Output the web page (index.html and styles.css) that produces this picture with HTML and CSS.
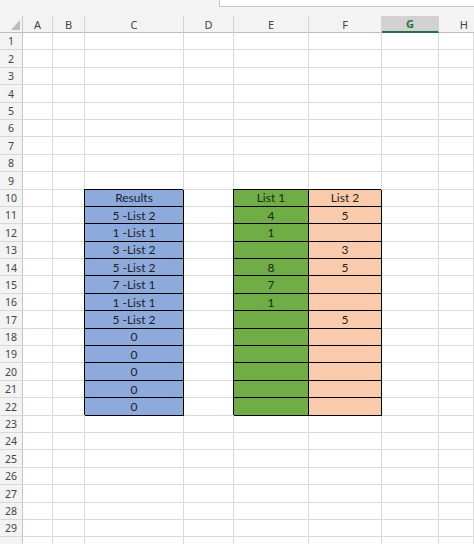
FILE: index.html
```html
<!DOCTYPE html>
<html>
<head>
<meta charset="utf-8">
<link rel="stylesheet" href="styles.css">
</head>
<body>
<div class="topband"><div class="fbox"></div></div>
<div class="sheet">
  <div class="corner"><svg width="23" height="17" viewBox="0 0 23 17"><polygon points="20,4 20,14 11,14" fill="#bdbdbd"/></svg></div>
  <div class="ch">A</div><div class="ch">B</div><div class="ch">C</div><div class="ch">D</div><div class="ch">E</div><div class="ch">F</div><div class="ch sel">G</div><div class="ch last">H</div>

  <div class="rh">1</div><div class="c"></div><div class="c"></div><div class="c"></div><div class="c"></div><div class="c"></div><div class="c"></div><div class="c"></div><div class="c"></div>
  <div class="rh">2</div><div class="c"></div><div class="c"></div><div class="c"></div><div class="c"></div><div class="c"></div><div class="c"></div><div class="c"></div><div class="c"></div>
  <div class="rh">3</div><div class="c"></div><div class="c"></div><div class="c"></div><div class="c"></div><div class="c"></div><div class="c"></div><div class="c"></div><div class="c"></div>
  <div class="rh">4</div><div class="c"></div><div class="c"></div><div class="c"></div><div class="c"></div><div class="c"></div><div class="c"></div><div class="c"></div><div class="c"></div>
  <div class="rh">5</div><div class="c"></div><div class="c"></div><div class="c"></div><div class="c"></div><div class="c"></div><div class="c"></div><div class="c"></div><div class="c"></div>
  <div class="rh">6</div><div class="c"></div><div class="c"></div><div class="c"></div><div class="c"></div><div class="c"></div><div class="c"></div><div class="c"></div><div class="c"></div>
  <div class="rh">7</div><div class="c"></div><div class="c"></div><div class="c"></div><div class="c"></div><div class="c"></div><div class="c"></div><div class="c"></div><div class="c"></div>
  <div class="rh">8</div><div class="c"></div><div class="c"></div><div class="c"></div><div class="c"></div><div class="c"></div><div class="c"></div><div class="c"></div><div class="c"></div>
  <div class="rh">9</div><div class="c"></div><div class="c"></div><div class="c"></div><div class="c"></div><div class="c"></div><div class="c"></div><div class="c"></div><div class="c"></div>
  <div class="rh">10</div><div class="c"></div><div class="c"></div><div class="c res">Results</div><div class="c"></div><div class="c l1">List 1</div><div class="c l2">List 2</div><div class="c"></div><div class="c"></div>
  <div class="rh">11</div><div class="c"></div><div class="c"></div><div class="c res">5 -List 2</div><div class="c"></div><div class="c l1">4</div><div class="c l2">5</div><div class="c"></div><div class="c"></div>
  <div class="rh">12</div><div class="c"></div><div class="c"></div><div class="c res">1 -List 1</div><div class="c"></div><div class="c l1">1</div><div class="c l2"></div><div class="c"></div><div class="c"></div>
  <div class="rh">13</div><div class="c"></div><div class="c"></div><div class="c res">3 -List 2</div><div class="c"></div><div class="c l1"></div><div class="c l2">3</div><div class="c"></div><div class="c"></div>
  <div class="rh">14</div><div class="c"></div><div class="c"></div><div class="c res">5 -List 2</div><div class="c"></div><div class="c l1">8</div><div class="c l2">5</div><div class="c"></div><div class="c"></div>
  <div class="rh">15</div><div class="c"></div><div class="c"></div><div class="c res">7 -List 1</div><div class="c"></div><div class="c l1">7</div><div class="c l2"></div><div class="c"></div><div class="c"></div>
  <div class="rh">16</div><div class="c"></div><div class="c"></div><div class="c res">1 -List 1</div><div class="c"></div><div class="c l1">1</div><div class="c l2"></div><div class="c"></div><div class="c"></div>
  <div class="rh">17</div><div class="c"></div><div class="c"></div><div class="c res">5 -List 2</div><div class="c"></div><div class="c l1"></div><div class="c l2">5</div><div class="c"></div><div class="c"></div>
  <div class="rh">18</div><div class="c"></div><div class="c"></div><div class="c res">0</div><div class="c"></div><div class="c l1"></div><div class="c l2"></div><div class="c"></div><div class="c"></div>
  <div class="rh">19</div><div class="c"></div><div class="c"></div><div class="c res">0</div><div class="c"></div><div class="c l1"></div><div class="c l2"></div><div class="c"></div><div class="c"></div>
  <div class="rh">20</div><div class="c"></div><div class="c"></div><div class="c res">0</div><div class="c"></div><div class="c l1"></div><div class="c l2"></div><div class="c"></div><div class="c"></div>
  <div class="rh">21</div><div class="c"></div><div class="c"></div><div class="c res">0</div><div class="c"></div><div class="c l1"></div><div class="c l2"></div><div class="c"></div><div class="c"></div>
  <div class="rh">22</div><div class="c"></div><div class="c"></div><div class="c res">0</div><div class="c"></div><div class="c l1"></div><div class="c l2"></div><div class="c"></div><div class="c"></div>
  <div class="rh">23</div><div class="c"></div><div class="c"></div><div class="c"></div><div class="c"></div><div class="c"></div><div class="c"></div><div class="c"></div><div class="c"></div>
  <div class="rh">24</div><div class="c"></div><div class="c"></div><div class="c"></div><div class="c"></div><div class="c"></div><div class="c"></div><div class="c"></div><div class="c"></div>
  <div class="rh">25</div><div class="c"></div><div class="c"></div><div class="c"></div><div class="c"></div><div class="c"></div><div class="c"></div><div class="c"></div><div class="c"></div>
  <div class="rh">26</div><div class="c"></div><div class="c"></div><div class="c"></div><div class="c"></div><div class="c"></div><div class="c"></div><div class="c"></div><div class="c"></div>
  <div class="rh">27</div><div class="c"></div><div class="c"></div><div class="c"></div><div class="c"></div><div class="c"></div><div class="c"></div><div class="c"></div><div class="c"></div>
  <div class="rh">28</div><div class="c"></div><div class="c"></div><div class="c"></div><div class="c"></div><div class="c"></div><div class="c"></div><div class="c"></div><div class="c"></div>
  <div class="rh">29</div><div class="c"></div><div class="c"></div><div class="c"></div><div class="c"></div><div class="c"></div><div class="c"></div><div class="c"></div><div class="c"></div>
  <div class="rh"></div><div class="c"></div><div class="c"></div><div class="c"></div><div class="c"></div><div class="c"></div><div class="c"></div><div class="c"></div><div class="c"></div>
</div>
</body>
</html>
```
FILE: styles.css
```css
html, body {
  margin: 0;
  padding: 0;
  background: #ffffff;
  overflow: hidden;
  width: 474px;
  height: 544px;
}
.topband {
  height: 16px;
  background: #f3f3f3;
  display: flex;
  justify-content: flex-end;
  box-sizing: border-box;
}
.fbox {
  width: 255px;
  height: 7px;
  background: #ffffff;
  border-left: 1px solid #c8c8c8;
  border-bottom: 1px solid #c8c8c8;
  box-sizing: border-box;
}
.sheet {
  display: grid;
  grid-template-columns: 23px 30px 32px 99px 50px 75px 73px 57px 35px;
  grid-template-rows: 17px;
  grid-auto-rows: 17.4px;
  font-family: Lato, "Liberation Sans", sans-serif;
}
.corner {
  background: #f3f3f3;
  border-right: 1px solid #c6c6c6;
  border-bottom: 1px solid #bdbdbd;
  box-sizing: border-box;
}
.corner svg { display: block; }
.ch {
  background: #f3f3f3;
  border-right: 1px solid #d4d4d4;
  border-bottom: 1px solid #bdbdbd;
  box-sizing: border-box;
  font-family: "Noto Sans", "Liberation Sans", sans-serif;
  font-size: 11px;
  color: #444444;
  display: flex;
  align-items: center;
  justify-content: center;
  line-height: 1;
}
.ch.sel {
  background: #d2d2d2;
  color: #217346;
  font-weight: bold;
  border-bottom: 2px solid #217346;
}
.ch.last {
  border-right: none;
  justify-content: flex-end;
  padding-right: 6px;
}
.rh {
  background: #f3f3f3;
  border-right: 1px solid #c6c6c6;
  border-bottom: 1px solid #d8d8d8;
  box-sizing: border-box;
  font-family: "Noto Sans", "Liberation Sans", sans-serif;
  font-size: 10.5px;
  color: #444444;
  display: flex;
  align-items: center;
  justify-content: center;
  line-height: 1;
  padding-top: 1px;
}
.c {
  border-right: 1px solid #dadada;
  border-bottom: 1px solid #dadada;
  box-sizing: border-box;
  font-size: 12px;
  color: #1a1a1a;
  display: flex;
  align-items: center;
  justify-content: center;
  line-height: 1;
  padding-top: 1px;
}
.res, .l1, .l2 {
  border-right: 1px solid #000000;
  border-bottom: 1px solid #000000;
  box-shadow: -1px -1px 0 #000000;
}
.res { background: #8eaadb; color: #1b1f2e; }
.l1 { background: #70ad47; color: #1c2a12; }
.l2 { background: #f8cbad; color: #2a1f18; }
```
